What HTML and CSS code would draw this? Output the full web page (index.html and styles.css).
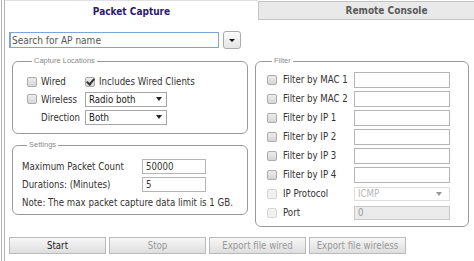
FILE: index.html
```html
<!DOCTYPE html>
<html lang="en">
<head>
    <meta charset="UTF-8">
    <title>Packet Capture</title>
    <link rel="stylesheet" href="styles.css">
</head>
<body>
<div class="frame">
<div class="panel">
    <div class="tabs">
        <div class="tab tab-active">Packet Capture</div>
        <div class="tab tab-idle">Remote Console</div>
    </div>

    <div class="search-row">
        <input class="search" type="text" placeholder="Search for AP name">
        <button class="drop" type="button"></button>
    </div>

    <div class="columns">
        <div class="left-col">
            <fieldset class="group locations">
                <legend>Capture Locations</legend>
                <div class="row">
                    <input type="checkbox" class="cb">
                    <span class="lbl">Wired</span>
                    <input type="checkbox" class="cb cb-inline" checked>
                    <span>Includes Wired Clients</span>
                </div>
                <div class="row row-tall">
                    <input type="checkbox" class="cb">
                    <span class="lbl">Wireless</span>
                    <span class="sel"><select><option>Radio both</option></select></span>
                </div>
                <div class="row row-tall">
                    <span class="cb-space"></span>
                    <span class="lbl">Direction</span>
                    <span class="sel"><select><option>Both</option></select></span>
                </div>
            </fieldset>

            <fieldset class="group settings">
                <legend>Settings</legend>
                <div class="row">
                    <span class="set-lbl">Maximum Packet Count</span>
                    <input type="text" class="field short" value="50000">
                </div>
                <div class="row">
                    <span class="set-lbl">Durations: (Minutes)</span>
                    <input type="text" class="field short" value="5">
                </div>
                <div class="row">Note: The max packet capture data limit is 1 GB.</div>
            </fieldset>
        </div>

        <fieldset class="group filter">
            <legend>Filter</legend>
            <div class="frow"><input type="checkbox" class="cb"><span class="flbl">Filter by MAC 1</span><input type="text" class="field wide"></div>
            <div class="frow"><input type="checkbox" class="cb"><span class="flbl">Filter by MAC 2</span><input type="text" class="field wide"></div>
            <div class="frow"><input type="checkbox" class="cb"><span class="flbl">Filter by IP 1</span><input type="text" class="field wide"></div>
            <div class="frow"><input type="checkbox" class="cb"><span class="flbl">Filter by IP 2</span><input type="text" class="field wide"></div>
            <div class="frow"><input type="checkbox" class="cb"><span class="flbl">Filter by IP 3</span><input type="text" class="field wide"></div>
            <div class="frow"><input type="checkbox" class="cb"><span class="flbl">Filter by IP 4</span><input type="text" class="field wide"></div>
            <div class="frow"><input type="checkbox" class="cb" disabled><span class="flbl">IP Protocol</span><span class="sel sel-off"><select disabled><option>ICMP</option></select></span></div>
            <div class="frow"><input type="checkbox" class="cb" disabled><span class="flbl">Port</span><input type="text" class="field wide" value="0" disabled></div>
        </fieldset>
    </div>

    <div class="actions">
        <button type="button" class="btn">Start</button>
        <button type="button" class="btn" disabled>Stop</button>
        <button type="button" class="btn" disabled>Export file wired</button>
        <button type="button" class="btn" disabled>Export file wireless</button>
    </div>
</div>
</div>
</body>
</html>
```

FILE: styles.css
```css
html, body {
    margin: 0;
    overflow: hidden;
}
body {
    background: #fff;
    font-family: "DejaVu Sans Condensed", "DejaVu Sans", sans-serif;
    font-size: 9.6px;
    color: #333;
    padding-left: 1px;
    height: 261px;
}
.frame {
    border-left: 1px solid #b4b4b4;
    padding-left: 2px;
    height: 261px;
    box-sizing: border-box;
}
.panel {
    border-left: 1px solid #b4b4b4;
    height: 100%;
}

/* tabs */
.tabs {
    display: flex;
    height: 20px;
}
.tab {
    font-weight: bold;
    font-size: 10px;
    line-height: 18px;
    text-align: center;
    box-sizing: border-box;
}
.tab-active {
    width: 253px;
    color: #2b1b6f;
    border-top: 1px solid #e2e2e2;
    line-height: 22px;
}
.tab-idle {
    flex: 1;
    margin-top: 1px;
    height: 19px;
    padding-left: 40px;
    background: #e9e9e9;
    border: 1px solid #c4c4c4;
    border-right: none;
    color: #5a5a5a;
}

/* search */
.search-row {
    display: flex;
    align-items: center;
    gap: 4px;
    margin-top: 11px;
    padding-left: 4px;
}
.search {
    width: 210px;
    height: 16px;
    box-sizing: border-box;
    border: 1px solid #7ea5d6;
    border-left: 2px solid #7ea5d6;
    padding: 0 2px 0 1px;
    font: inherit;
    font-size: 10px;
    outline: none;
}
.search::placeholder {
    color: #555;
}
.drop {
    position: relative;
    width: 18px;
    height: 18px;
    padding: 0;
    border: 1px solid #a9a9a9;
    border-radius: 3px;
    background: linear-gradient(#fbfbfb, #e4e4e4);
}
.drop::after {
    content: "";
    position: absolute;
    left: 5px;
    top: 7px;
    border-left: 3px solid transparent;
    border-right: 3px solid transparent;
    border-top: 3px solid #111;
}

/* layout */
.columns {
    display: flex;
    gap: 7px;
    margin-top: 8px;
    padding-left: 7px;
}
.left-col {
    display: flex;
    flex-direction: column;
    gap: 7px;
    width: 236px;
}
.group {
    margin: 0;
    border: 1px solid #9a9a9a;
    border-radius: 6px;
    min-width: 0;
}
.group legend {
    font-family: "Liberation Sans", Arial, sans-serif;
    font-size: 7.5px;
    line-height: 8px;
    color: #8a8a8a;
    padding: 0 2px;
    margin-left: 5px;
}

/* rows */
.row {
    display: flex;
    align-items: center;
    height: 18px;
}
.locations {
    padding: 8px 4px 7px 14px;
}
.locations .row {
    height: 17px;
}
.locations .row-tall {
    height: 18px;
}
.cb-space {
    width: 14px;
}
.lbl {
    width: 44px;
}
.cb-inline {
    margin-right: 4px !important;
}
.settings {
    padding: 8px 4px 3px 9px;
}
.set-lbl {
    width: 120px;
}
.filter {
    width: 214px;
    box-sizing: border-box;
    padding: 5px 4px 4px 11px;
}
.frow {
    display: flex;
    align-items: center;
    height: 19px;
}
.flbl {
    width: 71px;
}

/* controls */
.cb {
    appearance: none;
    position: relative;
    width: 10px;
    height: 10px;
    margin: 0 4px 0 0;
    border: 1px solid #ababab;
    border-radius: 2px;
    background: linear-gradient(#ececec, #d6d6d6);
    flex: none;
}
.filter .cb {
    margin-right: 6px;
}
.cb:checked::after {
    content: "";
    position: absolute;
    left: 2px;
    top: -1px;
    width: 3px;
    height: 6px;
    border-right: 2px solid #333;
    border-bottom: 2px solid #333;
    transform: rotate(40deg);
}
.cb:disabled {
    border-color: #d6d6d6;
    background: #f1f1f1;
}
.field {
    height: 15px;
    box-sizing: border-box;
    border: 1px solid #b5b5b5;
    padding: 0 3px;
    font: inherit;
    color: #333;
}
.short {
    width: 64px;
}
.wide {
    width: 96px;
    height: 16px;
}
.field:disabled {
    background: #ebebeb;
    border-color: #c8c8c8;
    color: #999;
    height: 14px;
}
.sel {
    position: relative;
    display: inline-block;
}
.sel select {
    appearance: none;
    width: 82px;
    height: 15px;
    border: 1px solid #a6a6a6;
    background: #fff;
    font: inherit;
    color: #222;
    padding: 0 3px;
    border-radius: 0;
}
.sel::after {
    content: "";
    position: absolute;
    right: 5px;
    top: 5px;
    border-left: 3px solid transparent;
    border-right: 3px solid transparent;
    border-top: 4px solid #222;
}
.sel-off select {
    width: 96px;
    height: 14px;
    border-color: #cfcfcf;
    color: #999;
}
.sel-off::after {
    border-top-color: #999;
    right: 8px;
}

/* buttons */
.actions {
    display: flex;
    gap: 3px;
    margin-top: 10px;
    padding-left: 4px;
}
.btn {
    width: 97px;
    height: 17px;
    padding: 0;
    border: 1px solid #bababa;
    background: linear-gradient(#f7f7f7, #dedede);
    font: inherit;
    color: #222;
}
.btn:disabled {
    color: #999;
}
```
